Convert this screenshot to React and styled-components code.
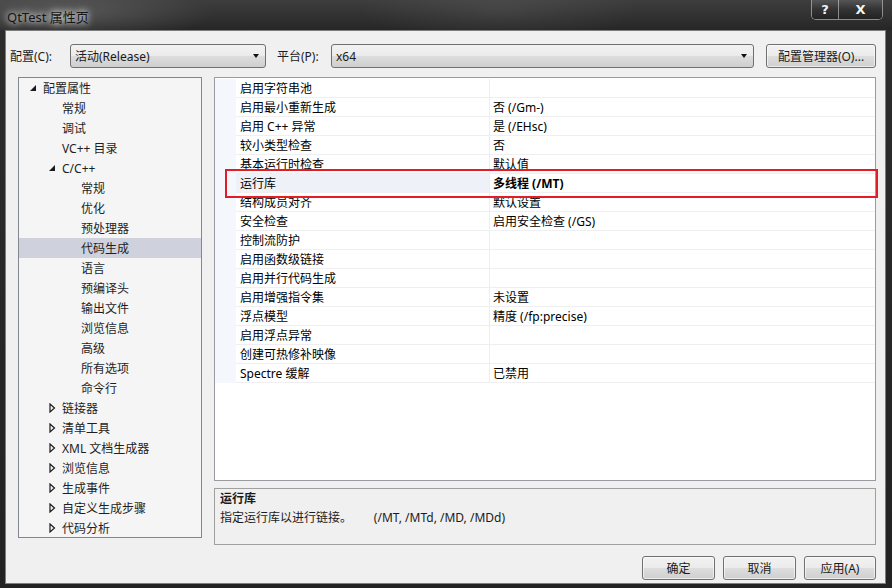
import React from 'react';
import styled, { createGlobalStyle } from 'styled-components';

const GlobalStyle = createGlobalStyle`
  html, body {
    margin: 0;
    padding: 0;
    background: #1e1e1e;
  }
  * {
    box-sizing: border-box;
  }
`;

const uiFont = `"Noto Sans", "Noto Sans CJK SC", sans-serif`;

const Frame = styled.div`
  width: 892px;
  height: 588px;
  display: flex;
  flex-direction: column;
  background: linear-gradient(180deg, #4a4a4a 0px, #2c2c2c 30px, #222 100%);
  font-family: ${uiFont};
  font-size: 12px;
  color: #1b1b1b;
  overflow: hidden;
`;

const TitleBar = styled.div`
  height: 30px;
  display: flex;
  justify-content: space-between;
  align-items: flex-start;
  background:
    radial-gradient(ellipse 220px 40px at 60px 14px, rgba(255,255,255,0.18), rgba(255,255,255,0) 70%),
    radial-gradient(ellipse 200px 60px at 500px 10px, rgba(255,255,255,0.07), rgba(255,255,255,0) 70%),
    linear-gradient(180deg, #3e3e3e, #262626);
`;

const Title = styled.div`
  padding: 7px 0 0 7px;
  font-size: 13px;
  color: #151515;
  text-shadow: 0 0 6px rgba(255,255,255,0.95), 0 0 10px rgba(255,255,255,0.7);
`;

const Controls = styled.div`
  display: flex;
  margin-right: 9px;
  border: 1px solid rgba(255,255,255,0.45);
  border-top: none;
  border-radius: 0 0 5px 5px;
  overflow: hidden;
`;

const ControlButton = styled.div`
  width: ${p => p.$w}px;
  height: 19px;
  display: flex;
  align-items: center;
  justify-content: center;
  color: #f4f4f4;
  font-weight: bold;
  font-size: 13px;
  font-family: "DejaVu Sans", sans-serif;
  background: linear-gradient(180deg, #555 0%, #333 50%, #222 100%);
  & + & {
    border-left: 1px solid rgba(255,255,255,0.45);
  }
`;

const Client = styled.div`
  flex: 1;
  margin: 0 6px 4px 5px;
  border: 1px solid #7d7d7d;
  background: #f0f0f0;
  padding: 13px 9px 3px 12px;
  display: flex;
  flex-direction: column;
`;

const ConfigRow = styled.div`
  height: 24px;
  display: flex;
  align-items: center;
  margin-left: -8px;
`;

const Label = styled.span`
  width: ${p => p.$w}px;
  flex: none;
  margin-left: ${p => p.$ml || 0}px;
  white-space: nowrap;
`;

const Combo = styled.div`
  height: 24px;
  width: ${p => (p.$w ? `${p.$w}px` : 'auto')};
  flex: ${p => (p.$w ? 'none' : 1)};
  border: 1px solid #707070;
  border-radius: 3px;
  background: linear-gradient(180deg, #f2f2f2 0%, #ebebeb 50%, #dddddd 51%, #cfcfcf 100%);
  display: flex;
  align-items: center;
  padding: 0 6px 0 4px;
  justify-content: space-between;
`;

const ComboArrow = styled.span`
  width: 0;
  height: 0;
  border-left: 3.5px solid transparent;
  border-right: 3.5px solid transparent;
  border-top: 4px solid #111;
`;

const PushButton = styled.div`
  height: 24px;
  width: ${p => p.$w}px;
  flex: none;
  border: 1px solid #707070;
  border-radius: 3px;
  background: linear-gradient(180deg, #f2f2f2 0%, #ebebeb 50%, #dddddd 51%, #cfcfcf 100%);
  box-shadow: inset 0 0 0 1px rgba(255,255,255,0.6);
  display: flex;
  align-items: center;
  justify-content: center;
  margin-left: ${p => p.$ml || 0}px;
`;

const Main = styled.div`
  margin-top: 9px;
  height: 468px;
  display: flex;
  align-items: flex-start;
  gap: 12px;
`;

const Tree = styled.div`
  width: 184px;
  height: 461px;
  border: 1px solid #828790;
  background: #f5f5f5;
`;

const TreeRow = styled.div`
  height: 20px;
  display: flex;
  align-items: center;
  padding-left: ${p => 10 + p.$level * 19}px;
  background: ${p => (p.$selected ? '#cfd1dd' : 'transparent')};
  color: #1e1e1e;
  white-space: nowrap;
`;

const Expander = styled.span`
  width: 14px;
  height: 20px;
  display: flex;
  align-items: center;
  padding-left: 1px;
`;

const RightColumn = styled.div`
  flex: 1;
  height: 468px;
  display: flex;
  flex-direction: column;
  gap: 7px;
`;

const Grid = styled.div`
  position: relative;
  height: 404px;
  border: 1px solid #999ba0;
  background: #fff;
  padding-top: 1px;
  display: flex;
  flex-direction: column;
`;

const GridRow = styled.div`
  height: 19px;
  flex: none;
  display: flex;
  background: linear-gradient(90deg, #f4f7fb 0, #f4f7fb 21px, transparent 21px);
`;

const Gutter = styled.div`
  width: 21px;
`;

const NameCell = styled.div`
  width: 254px;
  padding-left: 4px;
  display: flex;
  align-items: center;
  border-bottom: 1px solid #efeff2;
  border-right: 1px solid #eceef3;
  background: ${p => (p.$active ? '#eef1f7' : 'transparent')};
  color: #000;
  white-space: nowrap;
`;

const ValueCell = styled.div`
  flex: 1;
  padding-left: 3px;
  display: flex;
  align-items: center;
  border-bottom: 1px solid #efeff2;
  font-weight: ${p => (p.$bold ? 'bold' : 'normal')};
  color: #000;
  white-space: nowrap;
`;

const GridFiller = styled.div`
  flex: 1;
  background: #fff;
`;

const Highlight = styled.div`
  position: absolute;
  left: 10px;
  top: 91px;
  width: 653px;
  height: 29px;
  border: 2px solid #e31c25;
  pointer-events: none;
`;

const Description = styled.div`
  height: 57px;
  border: 1px solid #a0a0a0;
  background: #f0f0f0;
  padding: 0 5px;
`;

const DescTitle = styled.div`
  font-weight: bold;
  line-height: 19px;
`;

const DescText = styled.div`
  line-height: 19px;
  white-space: pre;
`;

const ButtonRow = styled.div`
  margin-top: 11px;
  display: flex;
  justify-content: flex-end;
  gap: 8px;
`;

const ExpandedIcon = () => (
  <svg width="7" height="7" viewBox="0 0 7 7">
    <polygon points="6,0 6,6 0,6" fill="#1a1a1a" />
  </svg>
);

const CollapsedIcon = () => (
  <svg width="7" height="10" viewBox="0 0 7 10">
    <polygon points="1,1 5.5,5 1,9" fill="none" stroke="#1a1a1a" strokeWidth="1.2" />
  </svg>
);

const treeItems = [
  { label: '配置属性', level: 0, arrow: 'open' },
  { label: '常规', level: 1 },
  { label: '调试', level: 1 },
  { label: 'VC++ 目录', level: 1 },
  { label: 'C/C++', level: 1, arrow: 'open' },
  { label: '常规', level: 2 },
  { label: '优化', level: 2 },
  { label: '预处理器', level: 2 },
  { label: '代码生成', level: 2, selected: true },
  { label: '语言', level: 2 },
  { label: '预编译头', level: 2 },
  { label: '输出文件', level: 2 },
  { label: '浏览信息', level: 2 },
  { label: '高级', level: 2 },
  { label: '所有选项', level: 2 },
  { label: '命令行', level: 2 },
  { label: '链接器', level: 1, arrow: 'closed' },
  { label: '清单工具', level: 1, arrow: 'closed' },
  { label: 'XML 文档生成器', level: 1, arrow: 'closed' },
  { label: '浏览信息', level: 1, arrow: 'closed' },
  { label: '生成事件', level: 1, arrow: 'closed' },
  { label: '自定义生成步骤', level: 1, arrow: 'closed' },
  { label: '代码分析', level: 1, arrow: 'closed' },
];

const properties = [
  ['启用字符串池', ''],
  ['启用最小重新生成', '否 (/Gm-)'],
  ['启用 C++ 异常', '是 (/EHsc)'],
  ['较小类型检查', '否'],
  ['基本运行时检查', '默认值'],
  ['运行库', '多线程 (/MT)', true],
  ['结构成员对齐', '默认设置'],
  ['安全检查', '启用安全检查 (/GS)'],
  ['控制流防护', ''],
  ['启用函数级链接', ''],
  ['启用并行代码生成', ''],
  ['启用增强指令集', '未设置'],
  ['浮点模型', '精度 (/fp:precise)'],
  ['启用浮点异常', ''],
  ['创建可热修补映像', ''],
  ['Spectre 缓解', '已禁用'],
];

export default function App() {
  return (
    <>
      <GlobalStyle />
      <Frame>
        <TitleBar>
          <Title>QtTest 属性页</Title>
          <Controls>
            <ControlButton $w={26}>?</ControlButton>
            <ControlButton $w={44}>X</ControlButton>
          </Controls>
        </TitleBar>
        <Client>
          <ConfigRow>
            <Label $w={60}>配置(C):</Label>
            <Combo $w={196}>
              <span>活动(Release)</span>
              <ComboArrow />
            </Combo>
            <Label $w={54} $ml={11}>平台(P):</Label>
            <Combo>
              <span>x64</span>
              <ComboArrow />
            </Combo>
            <PushButton $w={110} $ml={12}>配置管理器(O)...</PushButton>
          </ConfigRow>
          <Main>
            <Tree>
              {treeItems.map((item, idx) => (
                <TreeRow key={`tree-${idx}`} $level={item.level} $selected={item.selected}>
                  <Expander>
                    {item.arrow === 'open' && <ExpandedIcon />}
                    {item.arrow === 'closed' && <CollapsedIcon />}
                  </Expander>
                  {item.label}
                </TreeRow>
              ))}
            </Tree>
            <RightColumn>
              <Grid>
                {properties.map(([name, value, active], idx) => (
                  <GridRow key={`prop-${idx}`}>
                    <Gutter />
                    <NameCell $active={active}>{name}</NameCell>
                    <ValueCell $bold={active}>{value}</ValueCell>
                  </GridRow>
                ))}
                <GridFiller />
                <Highlight />
              </Grid>
              <Description>
                <DescTitle>运行库</DescTitle>
                <DescText>{'指定运行库以进行链接。       (/MT, /MTd, /MD, /MDd)'}</DescText>
              </Description>
            </RightColumn>
          </Main>
          <ButtonRow>
            <PushButton $w={73}>确定</PushButton>
            <PushButton $w={73}>取消</PushButton>
            <PushButton $w={72}>应用(A)</PushButton>
          </ButtonRow>
        </Client>
      </Frame>
    </>
  );
}
